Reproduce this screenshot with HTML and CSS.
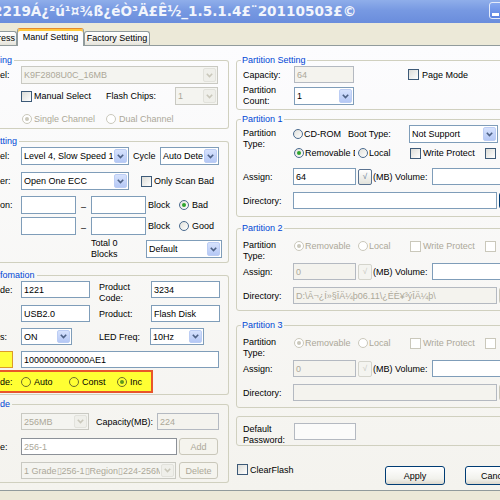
FILE: index.html
```html
<!DOCTYPE html>
<html>
<head>
<meta charset="utf-8">
<link rel="stylesheet" href="styles.css">
</head>
<body>
<div class="titlebar">
  <span class="title">2219Á¿²ú¹¤¾ß¿éÒ³Ä£Ê½_1.5.1.4£¨20110503£©</span>
  <span class="minbtn"><span class="minbar"></span></span>
</div>
<div class="tabs">
  <div class="tab tfirst">ress</div>
  <div class="tab tsel">Manuf Setting</div>
  <div class="tab tlast">Factory Setting</div>
</div>
<div class="panel">
  <div class="lcol">
    <fieldset class="grp lg mt8">
      <legend>ing</legend>
      <div class="row h18">
        <span class="frag">el:</span>
        <div class="cb dis w197"><span class="cbt">K9F2808U0C_16MB</span><span class="dd"><svg width="7" height="5" viewBox="0 0 7 5"><path d="M0.8 0.8 L3.5 3.6 L6.2 0.8" fill="none" stroke-width="1.6"/></svg></span></div>
      </div>
      <div class="row h18 mt3">
        <span class="frag"></span>
        <span class="opt w85"><span class="ck"></span><span class="ot">Manual Select</span></span>
        <span class="txt w69">Flash Chips:</span>
        <div class="cb dis w43"><span class="cbt">1</span><span class="dd"><svg width="7" height="5" viewBox="0 0 7 5"><path d="M0.8 0.8 L3.5 3.6 L6.2 0.8" fill="none" stroke-width="1.6"/></svg></span></div>
      </div>
      <div class="row h18 mt5">
        <span class="frag"></span>
        <span class="opt w85 gray"><span class="rd dis on ml1"></span><span class="ot">Single Channel</span></span>
        <span class="opt gray"><span class="rd dis"></span><span class="ot ml3">Dual Channel</span></span>
      </div>
    </fieldset>

    <fieldset class="grp lg mt6">
      <legend>tting</legend>
      <div class="row h18">
        <span class="frag">el:</span>
        <div class="cb w108"><span class="cbt">Level 4, Slow Speed 1</span><span class="dd"><svg width="7" height="5" viewBox="0 0 7 5"><path d="M0.8 0.8 L3.5 3.6 L6.2 0.8" fill="none" stroke-width="1.6"/></svg></span></div>
        <span class="txt w31 pl4">Cycle</span>
        <div class="cb w59"><span class="cbt">Auto Detect</span><span class="dd"><svg width="7" height="5" viewBox="0 0 7 5"><path d="M0.8 0.8 L3.5 3.6 L6.2 0.8" fill="none" stroke-width="1.6"/></svg></span></div>
      </div>
      <div class="row h18 mt7">
        <span class="frag">er:</span>
        <div class="cb w108"><span class="cbt">Open One ECC</span><span class="dd"><svg width="7" height="5" viewBox="0 0 7 5"><path d="M0.8 0.8 L3.5 3.6 L6.2 0.8" fill="none" stroke-width="1.6"/></svg></span></div>
        <span class="opt ml12"><span class="ck"></span><span class="ot">Only Scan Bad</span></span>
      </div>
      <div class="row h18 mt6">
        <span class="frag">on:</span>
        <div class="tb w55"></div>
        <span class="dash w15">–</span>
        <div class="tb w55"></div>
        <span class="txt w33 pl2">Block</span>
        <span class="opt"><span class="rd on"></span><span class="ot ml3">Bad</span></span>
      </div>
      <div class="row h18 mt3">
        <span class="frag"></span>
        <div class="tb w55"></div>
        <span class="dash w15">–</span>
        <div class="tb w55"></div>
        <span class="txt w33 pl2">Block</span>
        <span class="opt"><span class="rd"></span><span class="ot ml3">Good</span></span>
      </div>
      <div class="row h18 mt5">
        <span class="sp91"></span>
        <span class="two w55">Total 0<br>Blocks</span>
        <div class="cb w76"><span class="cbt">Default</span><span class="dd"><svg width="7" height="5" viewBox="0 0 7 5"><path d="M0.8 0.8 L3.5 3.6 L6.2 0.8" fill="none" stroke-width="1.6"/></svg></span></div>
      </div>
      <div class="pb4"></div>
    </fieldset>

    <fieldset class="grp lg mt6">
      <legend>fomation</legend>
      <div class="row h17">
        <span class="frag">de:</span>
        <div class="tb w69">1221</div>
        <span class="two w61 pl9 top1">Product<br>Code:</span>
        <div class="tb w69">3234</div>
      </div>
      <div class="row h17 mt7">
        <span class="frag"></span>
        <div class="tb w69">USB2.0</div>
        <span class="txt w61 pl9">Product:</span>
        <div class="tb w69">Flash Disk</div>
      </div>
      <div class="row h17 mt6">
        <span class="frag">s:</span>
        <div class="cb w51"><span class="cbt">ON</span><span class="dd"><svg width="7" height="5" viewBox="0 0 7 5"><path d="M0.8 0.8 L3.5 3.6 L6.2 0.8" fill="none" stroke-width="1.6"/></svg></span></div>
        <span class="txt w78 pl27">LED Freq:</span>
        <div class="cb w54"><span class="cbt">10Hz</span><span class="dd"><svg width="7" height="5" viewBox="0 0 7 5"><path d="M0.8 0.8 L3.5 3.6 L6.2 0.8" fill="none" stroke-width="1.6"/></svg></span></div>
      </div>
      <div class="row h17 mt6">
        <span class="ysmall"></span>
        <div class="tb w198">1000000000000AE1</div>
      </div>
      <div class="row mt2">
        <div class="ybig">
          <span class="frag">de:</span>
          <span class="opt w48"><span class="rd yl"></span><span class="ot ml3">Auto</span></span>
          <span class="opt w48"><span class="rd yl"></span><span class="ot ml3">Const</span></span>
          <span class="opt"><span class="rd yl on"></span><span class="ot ml3">Inc</span></span>
        </div>
      </div>
      <div class="pb1"></div>
    </fieldset>

    <fieldset class="grp lg mt3">
      <legend>de</legend>
      <div class="row h17 mt3">
        <span class="frag"></span>
        <div class="cb dis w68"><span class="cbt">256MB</span><span class="dd"><svg width="7" height="5" viewBox="0 0 7 5"><path d="M0.8 0.8 L3.5 3.6 L6.2 0.8" fill="none" stroke-width="1.6"/></svg></span></div>
        <span class="txt w68 pl7">Capacity(MB):</span>
        <div class="tb dis w62">224</div>
      </div>
      <div class="row h17 mt8">
        <span class="frag">e:</span>
        <div class="tb ro w156">256-1</div>
        <span class="btn dis w39 ml2">Add</span>
      </div>
      <div class="row h17 mt7">
        <span class="frag"></span>
        <div class="cb dis w155"><span class="cbt">1 Grade▯256-1▯Region▯224-256MB</span><span class="dd"><svg width="7" height="5" viewBox="0 0 7 5"><path d="M0.8 0.8 L3.5 3.6 L6.2 0.8" fill="none" stroke-width="1.6"/></svg></span></div>
        <span class="btn dis w39 ml3">Delete</span>
      </div>
      <div class="pb3"></div>
    </fieldset>
  </div>

  <div class="rcol">
    <fieldset class="grp rg mt8">
      <legend>Partition Setting</legend>
      <div class="row h17">
        <span class="txt w51">Capacity:</span>
        <div class="tb dis w60">64</div>
        <span class="opt ml54"><span class="ck"></span><span class="ot ml3">Page Mode</span></span>
      </div>
      <div class="row h18 mt4">
        <span class="two w51">Partition<br>Count:</span>
        <div class="cb w60"><span class="cbt">1</span><span class="dd"><svg width="7" height="5" viewBox="0 0 7 5"><path d="M0.8 0.8 L3.5 3.6 L6.2 0.8" fill="none" stroke-width="1.6"/></svg></span></div>
      </div>
      <div class="pb4"></div>
    </fieldset>

    <fieldset class="grp rg mt3">
      <legend>Partition 1</legend>
      <div class="row h18">
        <span class="two w50 top3">Partition<br>Type:</span>
        <span class="opt w55"><span class="rd"></span><span class="ot ml1">CD-ROM</span></span>
        <span class="txt w61">Boot Type:</span>
        <div class="cb w89"><span class="cbt">Not Support</span><span class="dd"><svg width="7" height="5" viewBox="0 0 7 5"><path d="M0.8 0.8 L3.5 3.6 L6.2 0.8" fill="none" stroke-width="1.6"/></svg></span></div>
      </div>
      <div class="row h18 mt1">
        <span class="sp50"></span>
        <span class="opt w65"><span class="rd on ml1"></span><span class="ot ml1 clip50">Removable Disk</span></span>
        <span class="opt w52"><span class="rd"></span><span class="ot ml1">Local</span></span>
        <span class="opt w75"><span class="ck"></span><span class="ot ml2">Write Protect</span></span>
        <span class="ck"></span>
      </div>
      <div class="row h17 mt6">
        <span class="txt w50">Assign:</span>
        <div class="tb w63">64</div>
        <span class="sbtn ml2">√</span>
        <span class="txt w23 pl1">(MB)</span>
        <span class="txt w37">Volume:</span>
        <div class="tb w120"></div>
      </div>
      <div class="row h17 mt7">
        <span class="txt w50">Directory:</span>
        <div class="tb w204"></div>
        <span class="btn w20 ml2"></span>
      </div>
      <div class="pb7"></div>
    </fieldset>

    <fieldset class="grp rg mt5">
      <legend>Partition 2</legend>
      <div class="row h18 mt3">
        <span class="two w50 top3">Partition<br>Type:</span>
        <span class="opt w65 gray"><span class="rd dis on ml1"></span><span class="ot ml1 clip50">Removable</span></span>
        <span class="opt w52 gray"><span class="rd dis"></span><span class="ot ml1">Local</span></span>
        <span class="opt w75 gray"><span class="ck dis"></span><span class="ot ml2">Write Protect</span></span>
        <span class="ck dis"></span>
      </div>
      <div class="row h17 mt8">
        <span class="txt w50">Assign:</span>
        <div class="tb dis w63">0</div>
        <span class="sbtn dis ml2">√</span>
        <span class="txt w23 pl1">(MB)</span>
        <span class="txt w37">Volume:</span>
        <div class="tb w120"></div>
      </div>
      <div class="row h17 mt7">
        <span class="txt w50">Directory:</span>
        <div class="tb dis w204">D:\Â¬¿Í»§ÎÄ¼þ06.11\¿ÉÈ¥³ýÎÄ¼þ\</div>
        <span class="btn dis w20 ml2"></span>
      </div>
      <div class="pb6"></div>
    </fieldset>

    <fieldset class="grp rg mt8">
      <legend>Partition 3</legend>
      <div class="row h18 mt3">
        <span class="two w50 top3">Partition<br>Type:</span>
        <span class="opt w65 gray"><span class="rd dis on ml1"></span><span class="ot ml1 clip50">Removable</span></span>
        <span class="opt w52 gray"><span class="rd dis"></span><span class="ot ml1">Local</span></span>
        <span class="opt w75 gray"><span class="ck dis"></span><span class="ot ml2">Write Protect</span></span>
        <span class="ck dis"></span>
      </div>
      <div class="row h17 mt8">
        <span class="txt w50">Assign:</span>
        <div class="tb dis w63">0</div>
        <span class="sbtn dis ml2">√</span>
        <span class="txt w23 pl1">(MB)</span>
        <span class="txt w37">Volume:</span>
        <div class="tb w120"></div>
      </div>
      <div class="row h17 mt7">
        <span class="txt w50">Directory:</span>
        <div class="tb dis w204"></div>
        <span class="btn dis w20 ml2"></span>
      </div>
      <div class="pb6"></div>
    </fieldset>

    <div class="pwbox">
      <div class="row h17">
        <span class="two w51 top1">Default<br>Password:</span>
        <div class="tb pw w62"></div>
      </div>
    </div>

    <div class="bottomrow">
      <span class="cfl"><span class="ck ml1"></span><span class="ot ml2">ClearFlash</span></span>
      <span class="btn big">Apply</span>
      <span class="btn big ml20">Cancel</span>
    </div>
  </div>
</div>
</body>
</html>
```

FILE: styles.css
```css
* { box-sizing: border-box; }
html, body { margin: 0; padding: 0; }
body {
  width: 500px;
  height: 500px;
  overflow: hidden;
  background: #ECE9D8;
  font-family: "Liberation Sans", Arial, sans-serif;
  font-size: 9px;
  color: #000;
}

/* title bar */
.titlebar {
  height: 23px;
  display: flex;
  align-items: flex-start;
  background: linear-gradient(#8FAEEA, #7799E2 45%, #6A8DDC);
}
.title {
  margin: 4px 0 0 -7px;
  font-family: "DejaVu Sans", sans-serif;
  font-weight: bold;
  font-size: 13.6px;
  line-height: 15px;
  color: #F2F5FC;
  white-space: nowrap;
}
.minbtn {
  flex: none;
  margin: 2px -10px 0 auto;
  width: 21px;
  height: 17px;
  border: 1px solid #E4EBFA;
  border-radius: 3px;
  background: linear-gradient(#86A8EF, #5A82E2);
  display: flex;
  align-items: flex-end;
  padding: 0 0 2px 2px;
}
.minbar { width: 7px; height: 3px; background: #fff; }

/* tabs */
.tabs { height: 22px; display: flex; align-items: flex-end; }
.tab {
  flex: none;
  height: 14px;
  border: 1px solid #919B9C;
  border-bottom: none;
  border-radius: 3px 3px 0 0;
  background: linear-gradient(#FFFFFF, #F4F3EE 60%, #E5E3DA);
  text-align: center;
  line-height: 13px;
  white-space: nowrap;
}
.tfirst { width: 20px; margin-left: -3px; text-align: right; padding-right: 3px; }
.tsel {
  width: 67px;
  height: 18px;
  margin-bottom: -1px;
  background: #FCFCFE;
  border-top: 1px solid #E68B2C;
  box-shadow: inset 0 2px 0 #FFC83C;
  position: relative;
  z-index: 1;
  line-height: 17px;
}
.tlast { width: 66px; }

/* panel */
.panel {
  height: 446px;
  border-top: 1px solid #919B9C;
  border-bottom: 1px solid #919B9C;
  background: linear-gradient(#FCFCFE, #F4F3EE);
  display: flex;
  align-items: flex-start;
}
.lcol { flex: none; width: 229px; }
.rcol { flex: none; width: 300px; margin-left: 7px; }

.grp {
  margin: 0;
  border: 1px solid #D0D0BF;
  border-radius: 3px;
  min-width: 0;
}
.grp legend {
  padding: 0 2px 0 0;
  height: 12px;
  line-height: 12px;
  color: #0046D5;
  white-space: nowrap;
}
.lg { border-left: none; border-radius: 0 3px 3px 0; padding: 0 10px 0 0; }
.rg { padding: 0 0 0 6px; }
.rg legend { padding: 0 1px; margin-left: -2px; }

.pwbox {
  margin-top: 8px;
  border: 1px solid #D0D0BF;
  border-radius: 3px;
  padding: 6px 0 5px 6px;
}
.bottomrow { margin-top: 18px; height: 21px; display: flex; align-items: flex-end; }
.cfl { align-self: flex-start; width: 149px; height: 11px; display: flex; align-items: center; flex: none; }

/* rows */
.row { display: flex; align-items: center; white-space: nowrap; }
.row > * { flex: none; }
.h17 { height: 17px; }
.h18 { height: 18px; }

.frag { width: 21px; }
.sp91 { width: 91px; }
.sp50 { width: 50px; }
.txt { display: block; }
.two { display: block; line-height: 11px; }
.top1 { align-self: flex-start; margin-top: 1px; }
.top3 { align-self: flex-start; margin-top: 3px; }
.dash { text-align: center; padding-top: 4px; }
.opt { display: flex; align-items: center; }
.ot { margin-left: 2px; }
.gray { color: #ACA899; }
.clip50 { width: 50px; overflow: hidden; }

/* controls */
.tb {
  height: 100%;
  border: 1px solid #7F9DB9;
  background: #fff;
  padding-left: 2px;
  display: flex;
  align-items: center;
  overflow: hidden;
  white-space: nowrap;
}
.tb.dis { background: #F4F3EE; border-color: #B4B9C1; color: #ACA899; }
.tb.ro { border-color: #8C9198; color: #ACA899; }
.tb.pw { border-color: #B4B9C1; background: #FBFBFA; }

.cb {
  height: 100%;
  border: 1px solid #7F9DB9;
  background: #fff;
  display: flex;
  align-items: stretch;
}
.cbt {
  flex: 1;
  min-width: 0;
  padding-left: 2px;
  overflow: hidden;
  display: flex;
  align-items: center;
  white-space: nowrap;
}
.dd {
  flex: none;
  width: 13px;
  margin: 1px;
  border: 1px solid #BCCDF4;
  border-radius: 2px;
  background: linear-gradient(#D6E2FD, #B5C8F5);
  display: flex;
  align-items: center;
  justify-content: center;
}
.dd path { stroke: #4D6185; }
.cb.dis { border-color: #C9C9C2; background: #F4F4F0; }
.cb.dis .cbt { color: #ACA899; }
.cb.dis .dd { background: #EFEFEA; border-color: #E2E2DC; }
.cb.dis .dd path { stroke: #C9C7BA; }

.ck {
  display: block;
  width: 11px;
  height: 11px;
  border: 1px solid #3D5A78;
  background: linear-gradient(135deg, #DCDCD7, #FFFFFF);
}
.ck.dis { border-color: #CAC8BB; background: #fff; }

.rd {
  width: 10px;
  height: 10px;
  border: 1px solid #4A6A8E;
  border-radius: 50%;
  background: linear-gradient(135deg, #E0E0DB, #FFFFFF);
  display: flex;
  align-items: center;
  justify-content: center;
  flex: none;
}
.rd.on::after {
  content: "";
  width: 4px;
  height: 4px;
  border-radius: 50%;
  background: #2DA52D;
}
.rd.dis { border-color: #CAC8BB; background: #fff; }
.rd.dis.on::after { background: #CAC8BB; }
.rd.yl { border-color: #6E6E2C; background: transparent; }
.rd.yl.on::after { background: #5E9A1C; }

.btn {
  height: 100%;
  border: 1px solid #003C74;
  border-radius: 3px;
  background: linear-gradient(#FFFFFF, #F1F1EC 70%, #DCD8CD);
  display: flex;
  align-items: center;
  justify-content: center;
}
.btn.dis { border-color: #C9C7BA; background: #F5F4EE; color: #ACA899; }
.btn.big { width: 60px; height: 19px; flex: none; }
.sbtn {
  width: 14px;
  height: 16px;
  border: 1px solid #5A7290;
  border-radius: 2px;
  background: linear-gradient(#FFFFFF, #E3E3DC);
  color: #5A7290;
  font-size: 8px;
  display: flex;
  align-items: center;
  justify-content: center;
}
.sbtn.dis { border-color: #D4D4CC; color: #C4C4BC; background: #F4F4F0; }

/* highlights */
.ysmall {
  width: 13px;
  height: 17px;
  margin-right: 8px;
  background: #FFFF3A;
  border: 1px solid #DD9A28;
  border-left: none;
}
.ybig {
  display: flex;
  align-items: center;
  width: 153px;
  height: 23px;
  background: #FFFF33;
  border: 2px solid #E8562A;
  border-left: none;
}
.ybig > * { flex: none; }

/* sizes */
.w14 { width: 14px; } .w15 { width: 15px; } .w20 { width: 20px; } .w23 { width: 23px; }
.w31 { width: 31px; } .w33 { width: 33px; } .w37 { width: 37px; } .w39 { width: 39px; }
.w43 { width: 43px; } .w48 { width: 48px; } .w50 { width: 50px; } .w51 { width: 51px; }
.w52 { width: 52px; } .w54 { width: 54px; } .w55 { width: 55px; } .w59 { width: 59px; }
.w60 { width: 60px; } .w61 { width: 61px; } .w62 { width: 62px; } .w63 { width: 63px; }
.w65 { width: 65px; } .w68 { width: 68px; } .w69 { width: 69px; } .w75 { width: 75px; }
.w76 { width: 76px; } .w78 { width: 78px; } .w85 { width: 85px; } .w89 { width: 89px; }
.w108 { width: 108px; } .w120 { width: 120px; } .w155 { width: 155px; } .w156 { width: 156px; }
.w197 { width: 197px; } .w198 { width: 198px; } .w204 { width: 204px; }

.mt1 { margin-top: 1px; } .mt2 { margin-top: 2px; } .mt3 { margin-top: 3px; } .mt4 { margin-top: 4px; }
.mt5 { margin-top: 5px; } .mt6 { margin-top: 6px; } .mt7 { margin-top: 7px; } .mt8 { margin-top: 8px; }
.ml1 { margin-left: 1px; } .ml2 { margin-left: 2px; } .ml3 { margin-left: 3px; }
.ml12 { margin-left: 12px; } .ml20 { margin-left: 20px; } .ml54 { margin-left: 54px; }
.pl1 { padding-left: 1px; } .pl2 { padding-left: 2px; } .pl4 { padding-left: 4px; } .pl7 { padding-left: 7px; }
.pl9 { padding-left: 9px; } .pl27 { padding-left: 27px; }
.pb1 { height: 1px; } .pb3 { height: 3px; } .pb4 { height: 4px; } .pb6 { height: 6px; } .pb7 { height: 7px; }
```
